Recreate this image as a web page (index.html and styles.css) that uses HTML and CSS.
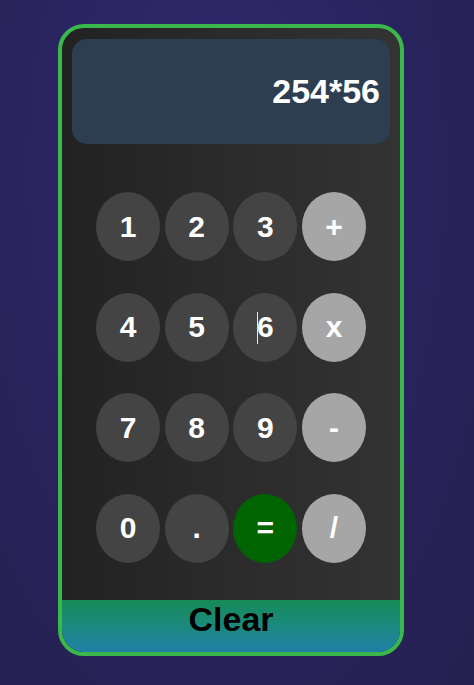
FILE: index.html
```html
<!DOCTYPE html>
<html>
<head>
<meta charset="utf-8">
<link rel="stylesheet" href="styles.css">
</head>
<body>
<div class="calc">
  <div class="display">254*56</div>
  <div class="keys">
    <button class="key num">1</button>
    <button class="key num">2</button>
    <button class="key num">3</button>
    <button class="key op">+</button>
    <button class="key num">4</button>
    <button class="key num">5</button>
    <button class="key num cur">6<span class="caret"></span></button>
    <button class="key op">x</button>
    <button class="key num">7</button>
    <button class="key num">8</button>
    <button class="key num">9</button>
    <button class="key op">-</button>
    <button class="key num">0</button>
    <button class="key num">.</button>
    <button class="key eq">=</button>
    <button class="key op">/</button>
  </div>
  <div class="clear">Clear</div>
</div>
</body>
</html>
```
FILE: styles.css
```css
html, body {
  margin: 0;
  padding: 0;
  height: 100%;
}
body {
  background: radial-gradient(ellipse at 45% 25%, #332b6e 0%, #2a2460 45%, #25204f 100%);
  font-family: "Liberation Sans", Arial, sans-serif;
  display: flex;
  justify-content: center;
  align-items: flex-start;
}
.calc {
  margin-top: 24px;
  margin-left: -12px;
  width: 338px;
  height: 624px;
  border: 4px solid #3bb84c;
  border-radius: 26px;
  background: linear-gradient(90deg, #222222 0%, #2b2b2b 50%, #333333 100%);
  display: flex;
  flex-direction: column;
  overflow: hidden;
}
.display {
  margin: 11px 10px 0 10px;
  height: 105px;
  border-radius: 15px;
  background: #2d3e50;
  color: #ffffff;
  font-weight: bold;
  font-size: 34px;
  display: flex;
  align-items: center;
  justify-content: flex-end;
  padding-right: 10px;
}
.keys {
  margin: 48px auto 0 auto;
  display: grid;
  grid-template-columns: repeat(4, 64px);
  grid-auto-rows: 69px;
  column-gap: 4.7px;
  row-gap: 31.5px;
}
.key {
  border: none;
  border-radius: 50%;
  color: #ffffff;
  font-family: "Liberation Sans", Arial, sans-serif;
  font-weight: bold;
  font-size: 30px;
  padding: 0;
  display: flex;
  align-items: center;
  justify-content: center;
  position: relative;
}
.num { background: #444444; }
.op { background: #a6a6a6; }
.eq { background: #006400; }
.caret {
  position: absolute;
  left: 24px;
  top: 19px;
  width: 1px;
  height: 32px;
  background: #e8e8e8;
}
.clear {
  margin-top: auto;
  height: 52px;
  background: linear-gradient(180deg, #178a58 0%, #1b8a7a 45%, #2080a8 100%);
  color: #000000;
  font-weight: bold;
  font-size: 34px;
  text-align: center;
  line-height: 39px;
}
```
